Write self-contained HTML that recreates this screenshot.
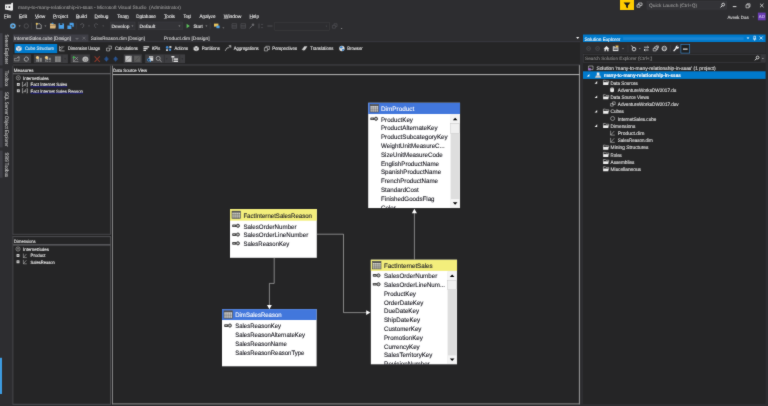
<!DOCTYPE html>
<html><head><meta charset="utf-8"><title>many-to-many-relationship-in-ssas - Microsoft Visual Studio</title>
<style>
html,body{margin:0;padding:0;background:#2d2d30;overflow:hidden}
svg{display:block;font-family:"Liberation Sans",sans-serif;will-change:transform}
text{white-space:pre;stroke-width:0.09px}
</style></head><body>
<svg text-rendering="geometricPrecision" width="768" height="406" viewBox="0 0 768 406">
<defs><filter id="soft" x="0" y="0" width="100%" height="100%" color-interpolation-filters="sRGB"><feConvolveMatrix order="3" kernelMatrix="0.02 0.07 0.02 0.07 0.64 0.07 0.02 0.07 0.02" edgeMode="duplicate" preserveAlpha="true"/></filter></defs>
<g filter="url(#soft)">
<rect x="0.00" y="0.00" width="768.00" height="406.00" fill="#2d2d30" />
<path d="M5 4.6 L11.2 4.2 L11.2 3 L13 2.8 L13 10.2 L11.4 10.7 L5 9.4 Z M6.2 6 L6.2 7.9 L7.3 7 Z M8 6.2 L9.4 7 L8 7.9 L10.2 7.9 L10.2 6.2 Z" fill="#ececec" stroke="none" stroke-width="0.4" fill-rule="evenodd"/>
<text x="18.00" y="9.03" font-size="4.8" fill="#999999" stroke="#999999" textLength="163.00" lengthAdjust="spacingAndGlyphs" >many-to-many-relationship-in-ssas - Microsoft Visual Studio  (Administrator)</text>
<rect x="620.00" y="0.00" width="14.00" height="10.00" fill="#ffcc00" />
<path d="M623.6 2.6 L630.4 2.6 L627.9 5.5 L627.9 8.3 L626.1 7.2 L626.1 5.5 Z" fill="#1a1a1a" stroke="none" stroke-width="0.4" />
<path d="M638.6 3 h3.4 v2.4 h-3.4 z" fill="none" stroke="#dcdcdc" stroke-width="0.7" />
<path d="M637 4.8 h3 v2.4 h-3 z" fill="#2d2d30" stroke="#dcdcdc" stroke-width="0.7" />
<rect x="647.00" y="1.70" width="79.80" height="7.40" fill="#333337" stroke="#434346" stroke-width="0.4"/>
<text x="649.00" y="7.33" font-size="4.8" fill="#9a9a9a" stroke="#9a9a9a" textLength="48.00" lengthAdjust="spacingAndGlyphs" stroke-width="0">Quick Launch (Ctrl+Q)</text>
<circle cx="723.2" cy="4.6" r="1.4" fill="none" stroke="#f1f1f1" stroke-width="0.8"/>
<line x1="722.20" y1="5.70" x2="720.60" y2="7.40" stroke="#f1f1f1" stroke-width="1" />
<line x1="732.80" y1="6.60" x2="736.40" y2="6.60" stroke="#f1f1f1" stroke-width="0.9" />
<path d="M746 4.8 h3 v3 h-3 z M747 4.8 v-1 h3 v3 h-1" fill="none" stroke="#f1f1f1" stroke-width="0.6" />
<path d="M760.1 3.8 l3.4 3.4 M763.5 3.8 l-3.4 3.4" fill="none" stroke="#f1f1f1" stroke-width="0.75" />
<text x="727.40" y="18.79" font-size="4.7" fill="#dedede" stroke="#dedede" textLength="21.20" lengthAdjust="spacingAndGlyphs" stroke-width="0.08">Aveek Das</text>
<path d="M752.4 16.4 h1.8 l-0.9 1 z" fill="#a8a8a8" stroke="none" stroke-width="0.4" />
<rect x="757.90" y="12.60" width="7.70" height="7.70" fill="#6a3cb4" />
<text x="758.80" y="18.38" font-size="4.4" fill="#d4c4f0" stroke="#d4c4f0" textLength="6.00" lengthAdjust="spacingAndGlyphs" >AD</text>
<text x="4.00" y="18.26" font-size="4.9" fill="#f1f1f1" stroke="#f1f1f1" textLength="7.00" lengthAdjust="spacingAndGlyphs" >File</text>
<line x1="4.00" y1="18.50" x2="6.65" y2="18.50" stroke="#d8d8d8" stroke-width="0.45" />
<text x="19.00" y="18.26" font-size="4.9" fill="#f1f1f1" stroke="#f1f1f1" textLength="8.00" lengthAdjust="spacingAndGlyphs" >Edit</text>
<line x1="19.00" y1="18.50" x2="22.10" y2="18.50" stroke="#d8d8d8" stroke-width="0.45" />
<text x="35.00" y="18.26" font-size="4.9" fill="#f1f1f1" stroke="#f1f1f1" textLength="10.30" lengthAdjust="spacingAndGlyphs" >View</text>
<line x1="35.00" y1="18.50" x2="38.20" y2="18.50" stroke="#d8d8d8" stroke-width="0.45" />
<text x="53.10" y="18.26" font-size="4.9" fill="#f1f1f1" stroke="#f1f1f1" textLength="15.00" lengthAdjust="spacingAndGlyphs" >Project</text>
<line x1="53.10" y1="18.50" x2="56.31" y2="18.50" stroke="#d8d8d8" stroke-width="0.45" />
<text x="76.00" y="18.26" font-size="4.9" fill="#f1f1f1" stroke="#f1f1f1" textLength="10.90" lengthAdjust="spacingAndGlyphs" >Build</text>
<line x1="76.00" y1="18.50" x2="79.27" y2="18.50" stroke="#d8d8d8" stroke-width="0.45" />
<text x="94.60" y="18.26" font-size="4.9" fill="#f1f1f1" stroke="#f1f1f1" textLength="13.90" lengthAdjust="spacingAndGlyphs" >Debug</text>
<line x1="94.60" y1="18.50" x2="98.01" y2="18.50" stroke="#d8d8d8" stroke-width="0.45" />
<text x="117.20" y="18.26" font-size="4.9" fill="#f1f1f1" stroke="#f1f1f1" textLength="11.50" lengthAdjust="spacingAndGlyphs" >Team</text>
<line x1="124.78" y1="18.50" x2="128.70" y2="18.50" stroke="#d8d8d8" stroke-width="0.45" />
<text x="136.20" y="18.26" font-size="4.9" fill="#f1f1f1" stroke="#f1f1f1" textLength="19.60" lengthAdjust="spacingAndGlyphs" >Database</text>
<line x1="139.51" y1="18.50" x2="142.05" y2="18.50" stroke="#d8d8d8" stroke-width="0.45" />
<text x="163.90" y="18.26" font-size="4.9" fill="#f1f1f1" stroke="#f1f1f1" textLength="11.10" lengthAdjust="spacingAndGlyphs" >Tools</text>
<line x1="163.90" y1="18.50" x2="166.80" y2="18.50" stroke="#d8d8d8" stroke-width="0.45" />
<text x="183.50" y="18.26" font-size="4.9" fill="#f1f1f1" stroke="#f1f1f1" textLength="7.50" lengthAdjust="spacingAndGlyphs" >Test</text>
<line x1="187.82" y1="18.50" x2="189.86" y2="18.50" stroke="#d8d8d8" stroke-width="0.45" />
<text x="199.40" y="18.26" font-size="4.9" fill="#f1f1f1" stroke="#f1f1f1" textLength="16.20" lengthAdjust="spacingAndGlyphs" >Analyze</text>
<line x1="202.44" y1="18.50" x2="204.97" y2="18.50" stroke="#d8d8d8" stroke-width="0.45" />
<text x="223.70" y="18.26" font-size="4.9" fill="#f1f1f1" stroke="#f1f1f1" textLength="17.80" lengthAdjust="spacingAndGlyphs" >Window</text>
<line x1="223.70" y1="18.50" x2="228.42" y2="18.50" stroke="#d8d8d8" stroke-width="0.45" />
<text x="249.40" y="18.26" font-size="4.9" fill="#f1f1f1" stroke="#f1f1f1" textLength="9.60" lengthAdjust="spacingAndGlyphs" >Help</text>
<line x1="249.40" y1="18.50" x2="252.77" y2="18.50" stroke="#d8d8d8" stroke-width="0.45" />
<circle cx="12.9" cy="26" r="2.05" fill="#2d2d30" stroke="#62b2ee" stroke-width="1.5"/>
<path d="M13.5 25.1 l-1.1 0.9 l1.1 0.9" fill="none" stroke="#eef6ff" stroke-width="0.5" />
<path d="M18.6 25.6 h2 l-1 1.1 z" fill="#9a9a9a" stroke="none" stroke-width="0.4" />
<circle cx="26.3" cy="26" r="2.2" fill="none" stroke="#555559" stroke-width="0.8"/>
<line x1="31.60" y1="22.60" x2="31.60" y2="29.40" stroke="#46464a" stroke-width="0.5" />
<path d="M36.6 23.8 h3.4 l1.2 1.2 v3.6 h-4.6 z" fill="none" stroke="#d8d8d8" stroke-width="0.6" />
<circle cx="36.8" cy="23.8" r="1.1" fill="#e8c35a"/>
<path d="M44.4 25.6 h2 l-1 1.1 z" fill="#9a9a9a" stroke="none" stroke-width="0.4" />
<path d="M50 23.4 h2.4 l0.8 0.8 h2.4 v1.2 h-5.6 z" fill="#dcb67a" stroke="none" stroke-width="0.4" />
<path d="M50 25.6 h6 l-0.6 3 h-5.4 z" fill="#dcb67a" stroke="none" stroke-width="0.4" />
<path d="M52.6 22.6 l1.6 1.2 h-3.2 z" fill="#4aa0e8" stroke="none" stroke-width="0.4" />
<path d="M58.6 23.2 h4.6 l0.8 0.8 v4.8 h-5.4 z" fill="#4aa0e8" stroke="none" stroke-width="0.4" />
<rect x="59.80" y="23.20" width="2.60" height="1.80" fill="#2d2d30" />
<path d="M67.4 25.4 h3.4 l0.6 0.6 v3 h-4 z" fill="#4aa0e8" stroke="none" stroke-width="0.4" />
<path d="M69.6 22.8 h3.6 l0.6 0.6 v3.4 h-1.6 v-1.6 h-2.6 z" fill="#4aa0e8" stroke="none" stroke-width="0.4" />
<line x1="76.20" y1="22.60" x2="76.20" y2="29.40" stroke="#46464a" stroke-width="0.5" />
<path d="M80.2 24.8 q2.2 -2.4 3.6 -0.2 q0.4 1.6 -1.6 3.4" fill="none" stroke="#6a6a6e" stroke-width="0.7" />
<path d="M88 25.6 h2 l-1 1.1 z" fill="#5a5a5e" stroke="none" stroke-width="0.4" />
<path d="M98 24.8 q-2.2 -2.4 -3.6 -0.2 q-0.4 1.6 1.6 3.4" fill="none" stroke="#5a5a5e" stroke-width="0.7" />
<path d="M102.2 25.6 h2 l-1 1.1 z" fill="#5a5a5e" stroke="none" stroke-width="0.4" />
<rect x="110.30" y="22.00" width="24.70" height="7.80" fill="#333337" stroke="#434346" stroke-width="0.4"/>
<text x="111.60" y="28.03" font-size="4.8" fill="#f1f1f1" stroke="#f1f1f1" textLength="17.80" lengthAdjust="spacingAndGlyphs" >Develop</text>
<path d="M131.4 25.6 h2 l-1 1.1 z" fill="#9a9a9a" stroke="none" stroke-width="0.4" />
<rect x="138.20" y="22.00" width="44.60" height="7.80" fill="#333337" stroke="#434346" stroke-width="0.4"/>
<text x="139.60" y="28.03" font-size="4.8" fill="#f1f1f1" stroke="#f1f1f1" textLength="15.80" lengthAdjust="spacingAndGlyphs" >Default</text>
<path d="M178.4 25.6 h2 l-1 1.1 z" fill="#9a9a9a" stroke="none" stroke-width="0.4" />
<path d="M186.6 23.8 l3.2 2.2 l-3.2 2.2 z" fill="#5cc25c" stroke="none" stroke-width="0.4" />
<text x="193.40" y="28.03" font-size="4.8" fill="#f1f1f1" stroke="#f1f1f1" textLength="9.40" lengthAdjust="spacingAndGlyphs" >Start</text>
<path d="M205.4 25.6 h2 l-1 1.1 z" fill="#9a9a9a" stroke="none" stroke-width="0.4" />
<line x1="210.20" y1="22.60" x2="210.20" y2="29.40" stroke="#46464a" stroke-width="0.5" />
<path d="M214 23.6 h4.4 v3 h-4.4 z" fill="#e8c35a" stroke="none" stroke-width="0.4" />
<path d="M216.4 25.6 h3.2 v2.6 h-3.2 z" fill="#4aa0e8" stroke="none" stroke-width="0.4" />
<path d="M222.4 27.4 h2 l-1 1.1 z" fill="#9a9a9a" stroke="none" stroke-width="0.4" />
<path d="M232.0 23.7 h4.6 v4.6 h-4.6 z M232.0 25.4 h4.6 M232.0 26.9 h4.6" fill="none" stroke="#56565a" stroke-width="0.6" />
<path d="M240.89999999999998 23.7 h4.6 v4.6 h-4.6 z M240.89999999999998 25.4 h4.6 M240.89999999999998 26.9 h4.6" fill="none" stroke="#56565a" stroke-width="0.6" />
<path d="M249.6 28.4 l2.6 -2.8" fill="none" stroke="#68686c" stroke-width="1.0" />
<circle cx="253" cy="24.7" r="1.3" fill="#68686c"/>
<path d="M259 23.6 v4.8 M261.2 24.4 h1.6 M261.2 27.6 h1.6" fill="none" stroke="#56565a" stroke-width="0.8" />
<line x1="267.40" y1="26.00" x2="272.40" y2="26.00" stroke="#56565a" stroke-width="0.9" />
<rect x="274.80" y="22.20" width="54.40" height="8.20" fill="#2d2d30" stroke="#434346" stroke-width="0.45"/>
<path d="M325.6 25.8 h1.6 l-0.8 0.9 z" fill="#5a5a5e" stroke="none" stroke-width="0.4" />
<path d="M332.4 25.4 h3 v2.8 h-3 z M334 25.4 v-1.6 h3 v2.8 h-1.4" fill="none" stroke="#56565a" stroke-width="0.6" />
<path d="M340.7 28 h1.8 l-0.9 1 z" fill="#9a9a9a" stroke="none" stroke-width="0.4" />
<rect x="0.00" y="33.20" width="2.60" height="32.20" fill="#3f3f46" />
<rect x="0.00" y="68.40" width="2.60" height="19.20" fill="#3f3f46" />
<rect x="0.00" y="90.60" width="2.60" height="56.80" fill="#3f3f46" />
<rect x="0.00" y="150.60" width="2.60" height="27.20" fill="#3f3f46" />
<text transform="translate(5.00,34.50) rotate(90)" font-size="5.0" fill="#c8c8c8" stroke="#c8c8c8" textLength="29.30" lengthAdjust="spacingAndGlyphs">Server Explorer</text>
<text transform="translate(5.00,70.40) rotate(90)" font-size="5.0" fill="#c8c8c8" stroke="#c8c8c8" textLength="15.80" lengthAdjust="spacingAndGlyphs">Toolbox</text>
<text transform="translate(5.00,92.00) rotate(90)" font-size="5.0" fill="#c8c8c8" stroke="#c8c8c8" textLength="54.40" lengthAdjust="spacingAndGlyphs">SQL Server Object Explorer</text>
<text transform="translate(5.00,152.40) rotate(90)" font-size="5.0" fill="#c8c8c8" stroke="#c8c8c8" textLength="24.60" lengthAdjust="spacingAndGlyphs">SSIS Toolbox</text>
<rect x="0.00" y="357.80" width="2.00" height="36.20" fill="#3d9be0" />
<rect x="13.00" y="42.00" width="567.00" height="362.50" fill="#252526" />
<rect x="13.00" y="34.50" width="75.40" height="7.50" fill="#3f3f46" />
<line x1="13.00" y1="41.70" x2="580.00" y2="41.70" stroke="#3f3f46" stroke-width="0.7" />
<text x="14.00" y="40.26" font-size="4.9" fill="#dcdcdc" stroke="#dcdcdc" textLength="56.80" lengthAdjust="spacingAndGlyphs" stroke-width="0.08">InternetSales.cube [Design]</text>
<line x1="75.40" y1="38.40" x2="78.60" y2="38.40" stroke="#8a8a8e" stroke-width="0.5" />
<line x1="77.00" y1="38.40" x2="77.00" y2="40.00" stroke="#8a8a8e" stroke-width="0.5" />
<path d="M82.6 36.8 l2.8 2.8 M85.4 36.8 l-2.8 2.8" fill="none" stroke="#8a8a8e" stroke-width="0.5" />
<text x="90.80" y="40.26" font-size="4.9" fill="#d8d8d8" stroke="#d8d8d8" textLength="54.00" lengthAdjust="spacingAndGlyphs" stroke-width="0.08">SalesReason.dim [Design]</text>
<text x="163.80" y="40.26" font-size="4.9" fill="#d8d8d8" stroke="#d8d8d8" textLength="45.80" lengthAdjust="spacingAndGlyphs" stroke-width="0.08">Product.dim [Design]</text>
<path d="M576.1 37.1 h3.2 l-1.6 1.8 z" fill="#f1f1f1" stroke="none" stroke-width="0.4" />
<rect x="14.60" y="44.00" width="42.60" height="9.10" fill="#007acc" />
<text x="25.00" y="50.36" font-size="4.9" fill="#f1f1f1" stroke="#f1f1f1" textLength="29.00" lengthAdjust="spacingAndGlyphs" >Cube Structure</text>
<text x="68.00" y="50.36" font-size="4.9" fill="#f1f1f1" stroke="#f1f1f1" textLength="32.00" lengthAdjust="spacingAndGlyphs" >Dimension Usage</text>
<text x="115.00" y="50.36" font-size="4.9" fill="#f1f1f1" stroke="#f1f1f1" textLength="22.90" lengthAdjust="spacingAndGlyphs" >Calculations</text>
<text x="152.00" y="50.36" font-size="4.9" fill="#f1f1f1" stroke="#f1f1f1" textLength="8.20" lengthAdjust="spacingAndGlyphs" >KPIs</text>
<text x="174.40" y="50.36" font-size="4.9" fill="#f1f1f1" stroke="#f1f1f1" textLength="13.60" lengthAdjust="spacingAndGlyphs" >Actions</text>
<text x="201.70" y="50.36" font-size="4.9" fill="#f1f1f1" stroke="#f1f1f1" textLength="18.30" lengthAdjust="spacingAndGlyphs" >Partitions</text>
<text x="233.70" y="50.36" font-size="4.9" fill="#f1f1f1" stroke="#f1f1f1" textLength="25.00" lengthAdjust="spacingAndGlyphs" >Aggregations</text>
<text x="272.30" y="50.36" font-size="4.9" fill="#f1f1f1" stroke="#f1f1f1" textLength="24.80" lengthAdjust="spacingAndGlyphs" >Perspectives</text>
<text x="310.20" y="50.36" font-size="4.9" fill="#f1f1f1" stroke="#f1f1f1" textLength="23.10" lengthAdjust="spacingAndGlyphs" >Translations</text>
<text x="347.30" y="50.36" font-size="4.9" fill="#f1f1f1" stroke="#f1f1f1" textLength="15.30" lengthAdjust="spacingAndGlyphs" >Browser</text>
<path d="M16 47.1 l2.8 -1.2 l2.8 1.2 v3 l-2.8 1.3 l-2.8 -1.3 z" fill="#e6e6e6" stroke="none" stroke-width="0.4" />
<path d="M16 47.1 l2.8 1.2 l2.8 -1.2 M18.8 48.3 v3" fill="none" stroke="#1a5c96" stroke-width="0.4" />
<path d="M59.6 45.9 v5 h5 M59.6 50.9 l4.4 -4.6 M59.6 47.9 l3 -1.4" fill="none" stroke="#d4d4d4" stroke-width="0.6" />
<path d="M106.6 48.1 h3 v2.8 h-3 z M108.4 46.1 h3 v2.8 h-1.2" fill="none" stroke="#d4d4d4" stroke-width="0.6" />
<rect x="143.40" y="46.30" width="5.80" height="1.20" fill="#e8e8e8" />
<rect x="143.40" y="48.10" width="4.20" height="1.20" fill="#e8e8e8" />
<rect x="143.40" y="49.90" width="2.60" height="1.00" fill="#e8e8e8" />
<circle cx="167.2" cy="47.4" r="1.3" fill="#3f8ad4"/>
<circle cx="170" cy="49.8" r="1.2" fill="#3f8ad4"/>
<path d="M166 51.1 h2 v-1.8 h-2 z M169.4 46.1 h2 v1.8 h-2 z" fill="#c8c8c8" stroke="none" stroke-width="0.4" />
<path d="M193.6 47.3 l2.6 -1.2 l2.6 1.2 v2.8 l-2.6 1.2 l-2.6 -1.2 z" fill="#dcdcdc" stroke="none" stroke-width="0.4" />
<path d="M196.2 48.5 v2.8 M193.6 47.3 l2.6 1.2 l2.6 -1.2" fill="none" stroke="#252526" stroke-width="0.4" />
<path d="M225.2 50.9 l1.8 -3 h1.6 l2 -2.2 M228.8 45.7 h2 v2" fill="none" stroke="#d4d4d4" stroke-width="0.7" />
<path d="M264.4 47.7 h3.2 v3.2 h-3.2 z M265.8 47.7 v-1.4 h3.6 v3.2 h-1.6" fill="none" stroke="#d4d4d4" stroke-width="0.6" />
<path d="M302 49.7 l2.4 -3.2 h2.6 l-2.2 3.4 z M303.4 51.1 l2.2 -3.4" fill="#d0d0d0" stroke="#d4d4d4" stroke-width="0.4" />
<circle cx="341.9" cy="48.5" r="2.7" fill="#dcdcdc"/>
<path d="M339.6 47.1 q2 -1.6 3.4 0.2 q-1 1.6 -2.6 1 z M342 49.3 q1.6 -0.6 2.4 0.4 q-0.8 1.4 -2.2 1.4 z" fill="#3a86d0" stroke="none" stroke-width="0.4" />
<rect x="13.20" y="54.40" width="17.80" height="8.70" fill="#3e3e41" />
<rect x="33.90" y="54.40" width="34.00" height="8.70" fill="#3e3e41" />
<rect x="70.60" y="54.40" width="19.20" height="8.70" fill="#3e3e41" />
<rect x="123.80" y="54.40" width="18.10" height="8.70" fill="#3e3e41" />
<rect x="145.20" y="54.40" width="39.80" height="8.70" fill="#3e3e41" />
<line x1="32.50" y1="55.00" x2="32.50" y2="62.60" stroke="#222224" stroke-width="0.5" />
<line x1="69.30" y1="55.00" x2="69.30" y2="62.60" stroke="#222224" stroke-width="0.5" />
<line x1="91.40" y1="55.00" x2="91.40" y2="62.60" stroke="#222224" stroke-width="0.5" />
<line x1="122.20" y1="55.00" x2="122.20" y2="62.60" stroke="#222224" stroke-width="0.5" />
<line x1="143.50" y1="55.00" x2="143.50" y2="62.60" stroke="#222224" stroke-width="0.5" />
<line x1="62.00" y1="55.00" x2="62.00" y2="62.60" stroke="#2a2a2c" stroke-width="0.5" />
<line x1="164.40" y1="55.00" x2="164.40" y2="62.60" stroke="#2a2a2c" stroke-width="0.5" />
<line x1="179.70" y1="55.00" x2="179.70" y2="62.60" stroke="#2a2a2c" stroke-width="0.5" />
<path d="M14.4 58.4 h2.2 l2.4 -2 v4.4 h-4.6 z" fill="none" stroke="#9c9c9c" stroke-width="0.7" />
<line x1="17.00" y1="57.40" x2="19.60" y2="57.40" stroke="#9c9c9c" stroke-width="0.6" />
<circle cx="26.3" cy="59.1" r="2.1" fill="none" stroke="#b4b4b4" stroke-width="0.9"/>
<path d="M24 56.6 l1 1.4 M28.6 61.4 l-1 -1.4" fill="none" stroke="#3e3e41" stroke-width="0.8" />
<rect x="37.40" y="56.60" width="1.80" height="5.20" fill="#9a9a9a" />
<rect x="39.80" y="57.80" width="2.00" height="4.00" fill="#8a8a8a" />
<rect x="36.20" y="59.40" width="0.80" height="2.40" fill="#8a8a8a" />
<circle cx="37.4" cy="57.5" r="1.5" fill="#f0cc84"/>
<rect x="46.40" y="56.60" width="1.80" height="5.20" fill="#9a9a9a" />
<rect x="48.80" y="57.80" width="2.00" height="4.00" fill="#8a8a8a" />
<rect x="45.20" y="59.40" width="0.80" height="2.40" fill="#8a8a8a" />
<circle cx="46.4" cy="57.5" r="1.5" fill="#f0cc84"/>
<rect x="46.40" y="60.20" width="4.20" height="1.00" fill="#3e3e41" />
<rect x="55.00" y="56.40" width="5.80" height="5.50" fill="#8c8c8c" />
<line x1="57.90" y1="56.40" x2="57.90" y2="61.90" stroke="#5a5a5a" stroke-width="0.4" />
<line x1="55.00" y1="58.20" x2="60.80" y2="58.20" stroke="#5a5a5a" stroke-width="0.4" />
<line x1="55.00" y1="60.00" x2="60.80" y2="60.00" stroke="#5a5a5a" stroke-width="0.4" />
<path d="M64.2 58.6 h1.8 l-0.9 1 z" fill="#242426" stroke="none" stroke-width="0.4" />
<path d="M73.4 56.6 v5 h5 M73.4 61.6 l4.4 -4.6 M75 57 l3 3" fill="none" stroke="#a8a8a8" stroke-width="0.6" />
<circle cx="73.8" cy="57.4" r="1.1" fill="#3fbf4f"/>
<path d="M82.4 59.6 q0 -3 3 -3 q3 0 3 3 q0 2.4 -3 2.4 q-3 0 -3 -2.4 z" fill="#b8b8b8" stroke="none" stroke-width="0.4" />
<circle cx="85.6" cy="59.8" r="1.3" fill="none" stroke="#6a6a6a" stroke-width="0.5"/>
<path d="M94.6 56.4 l5.2 5.4 M99.8 56.4 l-5.2 5.4" fill="none" stroke="#8c3628" stroke-width="1.05" />
<path d="M106.4 56.2 l2.4 2.8 l-2.4 2.8 l-2.4 -2.8 z" fill="#244a80" stroke="none" stroke-width="0.4" />
<path d="M106.4 57.4 v3.2 m-1 -1 l1 1 l1 -1" fill="none" stroke="#3f6aa8" stroke-width="0.35" />
<path d="M115.6 56.2 l2.4 2.8 l-2.4 2.8 l-2.4 -2.8 z" fill="#244a80" stroke="none" stroke-width="0.4" />
<path d="M115.6 60.6 v-3.2 m-1 1 l1 -1 l1 1" fill="none" stroke="#3f6aa8" stroke-width="0.35" />
<rect x="125.30" y="55.80" width="6.30" height="6.10" fill="#c4c4c4" />
<path d="M125.8 61.4 l5.2 -5" fill="none" stroke="#7a7a7a" stroke-width="0.6" />
<rect x="134.10" y="55.80" width="6.40" height="6.10" fill="#5c5c5c" />
<path d="M134.6 61.4 l5.2 -5" fill="none" stroke="#484848" stroke-width="0.6" />
<path d="M149 56.2 h4.2 v4.6 h-4.2 z" fill="#d8d8d8" stroke="none" stroke-width="0.4" />
<line x1="149.00" y1="57.40" x2="153.20" y2="57.40" stroke="#5a5a5a" stroke-width="0.4" />
<circle cx="148.8" cy="59.8" r="1.3" fill="#2d2d30" stroke="#4aa0ec" stroke-width="0.8"/>
<line x1="149.80" y1="60.80" x2="151.00" y2="62.00" stroke="#4aa0ec" stroke-width="0.8" />
<circle cx="158.2" cy="58.4" r="2" fill="none" stroke="#a8a8a8" stroke-width="0.8"/>
<line x1="159.60" y1="60.00" x2="161.60" y2="61.80" stroke="#a8a8a8" stroke-width="0.9" />
<path d="M165.8 58.6 h1.8 l-0.9 1 z" fill="#242426" stroke="none" stroke-width="0.4" />
<rect x="171.40" y="56.00" width="3.00" height="1.60" fill="#e4e4e4" />
<rect x="174.00" y="58.40" width="4.00" height="1.40" fill="#e4e4e4" />
<rect x="174.00" y="60.60" width="4.00" height="1.40" fill="#e4e4e4" />
<path d="M172.6 57.6 v3.8 h1.4 M172.6 59.1 h1.4" fill="none" stroke="#e4e4e4" stroke-width="0.5" />
<path d="M181.4 58.6 h1.8 l-0.9 1 z" fill="#242426" stroke="none" stroke-width="0.4" />
<rect x="13.00" y="64.20" width="567.00" height="1.50" fill="#3a3a3d" />
<line x1="12.90" y1="65.70" x2="12.90" y2="234.30" stroke="#4e4e52" stroke-width="0.8" />
<line x1="110.60" y1="65.70" x2="110.60" y2="234.30" stroke="#5a5a5e" stroke-width="0.8" />
<line x1="12.50" y1="234.30" x2="111.00" y2="234.30" stroke="#4e4e52" stroke-width="0.8" />
<line x1="13.00" y1="73.80" x2="110.60" y2="73.80" stroke="#6e6e72" stroke-width="1.1" />
<text x="13.80" y="71.76" font-size="4.6" fill="#f1f1f1" stroke="#f1f1f1" textLength="19.60" lengthAdjust="spacingAndGlyphs" >Measures</text>
<line x1="12.50" y1="236.60" x2="111.00" y2="236.60" stroke="#58585c" stroke-width="0.8" />
<line x1="13.00" y1="244.90" x2="110.60" y2="244.90" stroke="#66666a" stroke-width="1.1" />
<line x1="12.90" y1="236.60" x2="12.90" y2="404.20" stroke="#4e4e52" stroke-width="0.8" />
<line x1="110.60" y1="236.60" x2="110.60" y2="404.20" stroke="#5a5a5e" stroke-width="0.8" />
<line x1="12.50" y1="404.30" x2="111.00" y2="404.30" stroke="#4a4c52" stroke-width="1.0" />
<text x="14.10" y="242.86" font-size="4.6" fill="#f1f1f1" stroke="#f1f1f1" textLength="21.50" lengthAdjust="spacingAndGlyphs" >Dimensions</text>
<circle cx="18.3" cy="77.8" r="2.1" fill="none" stroke="#c8c8c8" stroke-width="0.5"/>
<path d="M17.3 77.39999999999999 h2 M18.3 77.39999999999999 v1.6" fill="none" stroke="#c8c8c8" stroke-width="0.4" />
<text x="23.00" y="79.76" font-size="4.6" fill="#f1f1f1" stroke="#f1f1f1" textLength="25.80" lengthAdjust="spacingAndGlyphs" >InternetSales</text>
<rect x="16.90" y="83.00" width="2.80" height="2.80" fill="#e8e8e8" />
<line x1="17.50" y1="84.40" x2="19.10" y2="84.40" stroke="#333" stroke-width="0.4" />
<line x1="18.30" y1="83.60" x2="18.30" y2="85.20" stroke="#333" stroke-width="0.4" />
<path d="M23.2 82.2 h-0.8 v4.4 h0.8 M26.6 82.2 h0.8 v4.4 h-0.8 M23.6 85.8 v-0.8 M24.6 85.8 v-1.8 M25.7 85.8 v-3" fill="none" stroke="#e0e0e0" stroke-width="0.55" />
<text x="30.50" y="86.26" font-size="4.6" fill="#f1f1f1" stroke="#f1f1f1" textLength="36.70" lengthAdjust="spacingAndGlyphs" >Fact Internet Sales</text>
<line x1="30.50" y1="86.80" x2="67.20" y2="86.80" stroke="#1818a8" stroke-width="0.7" />
<rect x="16.90" y="89.40" width="2.80" height="2.80" fill="#e8e8e8" />
<line x1="17.50" y1="90.80" x2="19.10" y2="90.80" stroke="#333" stroke-width="0.4" />
<line x1="18.30" y1="90.00" x2="18.30" y2="91.60" stroke="#333" stroke-width="0.4" />
<path d="M23.2 88.6 h-0.8 v4.4 h0.8 M26.6 88.6 h0.8 v4.4 h-0.8 M23.6 92.2 v-0.8 M24.6 92.2 v-1.8 M25.7 92.2 v-3" fill="none" stroke="#e0e0e0" stroke-width="0.55" />
<text x="30.50" y="92.66" font-size="4.6" fill="#f1f1f1" stroke="#f1f1f1" textLength="52.50" lengthAdjust="spacingAndGlyphs" >Fact Internet Sales Reason</text>
<line x1="30.50" y1="93.20" x2="83.00" y2="93.20" stroke="#1818a8" stroke-width="0.7" />
<circle cx="18" cy="249" r="2.1" fill="none" stroke="#c8c8c8" stroke-width="0.5"/>
<path d="M17 248.6 h2 M18 248.6 v1.6" fill="none" stroke="#c8c8c8" stroke-width="0.4" />
<text x="23.00" y="250.96" font-size="4.6" fill="#f1f1f1" stroke="#f1f1f1" textLength="26.00" lengthAdjust="spacingAndGlyphs" >InternetSales</text>
<rect x="16.60" y="254.10" width="2.80" height="2.80" fill="#e8e8e8" />
<line x1="17.20" y1="255.50" x2="18.80" y2="255.50" stroke="#333" stroke-width="0.4" />
<line x1="18.00" y1="254.70" x2="18.00" y2="256.30" stroke="#333" stroke-width="0.4" />
<path d="M23.4 253.6 v4 h3.4 M23.4 257.6 l3 -3.6" fill="none" stroke="#c8c8c8" stroke-width="0.5" />
<text x="30.60" y="257.46" font-size="4.6" fill="#f1f1f1" stroke="#f1f1f1" textLength="14.90" lengthAdjust="spacingAndGlyphs" >Product</text>
<rect x="16.60" y="260.40" width="2.80" height="2.80" fill="#e8e8e8" />
<line x1="17.20" y1="261.80" x2="18.80" y2="261.80" stroke="#333" stroke-width="0.4" />
<line x1="18.00" y1="261.00" x2="18.00" y2="262.60" stroke="#333" stroke-width="0.4" />
<path d="M23.4 259.8 v4 h3.4 M23.4 263.8 l3 -3.6" fill="none" stroke="#c8c8c8" stroke-width="0.5" />
<text x="30.60" y="263.76" font-size="4.6" fill="#f1f1f1" stroke="#f1f1f1" textLength="24.20" lengthAdjust="spacingAndGlyphs" >SalesReason</text>
<line x1="112.60" y1="74.60" x2="579.80" y2="74.60" stroke="#c8c8c8" stroke-width="0.9" />
<line x1="112.50" y1="65.70" x2="112.50" y2="404.30" stroke="#8c8c8c" stroke-width="0.9" />
<line x1="579.40" y1="65.20" x2="579.40" y2="404.30" stroke="#a8a8a8" stroke-width="0.9" />
<line x1="112.10" y1="403.90" x2="579.90" y2="403.90" stroke="#8a8a8a" stroke-width="1.0" />
<text x="113.20" y="71.96" font-size="4.6" fill="#f1f1f1" stroke="#f1f1f1" textLength="33.80" lengthAdjust="spacingAndGlyphs" >Data Source View</text>
<clipPath id="c1"><rect x="368.1" y="102.6" width="92.09999999999997" height="105.6"/></clipPath><g clip-path="url(#c1)">
<rect x="368.10" y="102.60" width="92.10" height="105.60" fill="#ffffff" />
<rect x="368.10" y="102.60" width="92.10" height="11.40" fill="#4277dc" />
<rect x="370.10" y="104.60" width="8.40" height="7.40" fill="#e4e4e4" />
<rect x="370.10" y="104.60" width="8.40" height="1.50" fill="#555" />
<line x1="372.20" y1="106.30" x2="372.20" y2="112.00" stroke="#444" stroke-width="0.4" />
<line x1="374.30" y1="106.30" x2="374.30" y2="112.00" stroke="#444" stroke-width="0.4" />
<line x1="376.40" y1="106.30" x2="376.40" y2="112.00" stroke="#444" stroke-width="0.4" />
<line x1="370.10" y1="107.90" x2="378.50" y2="107.90" stroke="#444" stroke-width="0.4" />
<line x1="370.10" y1="109.40" x2="378.50" y2="109.40" stroke="#444" stroke-width="0.4" />
<line x1="370.10" y1="110.90" x2="378.50" y2="110.90" stroke="#444" stroke-width="0.4" />
<rect x="370.1" y="104.6" width="8.4" height="7.4" fill="none" stroke="#444" stroke-width="0.6"/>
<text x="381.00" y="111.10" font-size="6.4" fill="#fff" stroke="#fff" textLength="33.26" lengthAdjust="spacingAndGlyphs" stroke-width="0.06">DimProduct</text>
<text x="381.00" y="121.50" font-size="6.4" fill="#101018" stroke="#101018" textLength="31.93" lengthAdjust="spacingAndGlyphs" stroke-width="0.05">ProductKey</text>
<rect x="370.30" y="117.40" width="4" height="2.7" rx="0.7" fill="#454545"/>
<rect x="371.20" y="118.30" width="2" height="0.9" fill="#a0a0a0"/>
<circle cx="376.00" cy="118.75" r="1.55" fill="#b4b4b4" stroke="#3c3c3c" stroke-width="1"/>
<text x="381.00" y="130.30" font-size="6.4" fill="#101018" stroke="#101018" textLength="56.65" lengthAdjust="spacingAndGlyphs" stroke-width="0.05">ProductAlternateKey</text>
<text x="381.00" y="139.10" font-size="6.4" fill="#101018" stroke="#101018" textLength="66.60" lengthAdjust="spacingAndGlyphs" stroke-width="0.05">ProductSubcategoryKey</text>
<text x="381.00" y="147.90" font-size="6.4" fill="#101018" stroke="#101018" textLength="63.73" lengthAdjust="spacingAndGlyphs" stroke-width="0.05">WeightUnitMeasureC...</text>
<text x="381.00" y="156.70" font-size="6.4" fill="#101018" stroke="#101018" textLength="61.79" lengthAdjust="spacingAndGlyphs" stroke-width="0.05">SizeUnitMeasureCode</text>
<text x="381.00" y="165.50" font-size="6.4" fill="#101018" stroke="#101018" textLength="58.02" lengthAdjust="spacingAndGlyphs" stroke-width="0.05">EnglishProductName</text>
<text x="381.00" y="174.30" font-size="6.4" fill="#101018" stroke="#101018" textLength="60.08" lengthAdjust="spacingAndGlyphs" stroke-width="0.05">SpanishProductName</text>
<text x="381.00" y="183.10" font-size="6.4" fill="#101018" stroke="#101018" textLength="56.98" lengthAdjust="spacingAndGlyphs" stroke-width="0.05">FrenchProductName</text>
<text x="381.00" y="191.90" font-size="6.4" fill="#101018" stroke="#101018" textLength="37.76" lengthAdjust="spacingAndGlyphs" stroke-width="0.05">StandardCost</text>
<text x="381.00" y="200.70" font-size="6.4" fill="#101018" stroke="#101018" textLength="53.55" lengthAdjust="spacingAndGlyphs" stroke-width="0.05">FinishedGoodsFlag</text>
<text x="381.00" y="209.50" font-size="6.4" fill="#101018" stroke="#101018" textLength="14.76" lengthAdjust="spacingAndGlyphs" stroke-width="0.05">Color</text>
<rect x="450.60" y="114.60" width="9.10" height="93.00" fill="#dedede" />
<rect x="450.60" y="114.60" width="9.10" height="8.60" fill="#f4f4f4" />
<rect x="450.60" y="199.00" width="9.10" height="8.60" fill="#f4f4f4" />
<rect x="450.60" y="123.60" width="9.10" height="9.80" fill="#f0f0f0" stroke="#b8b8b8" stroke-width="0.3"/>
<path d="M452.84999999999997 120.2 h4.6 l-2.3 -2.5 z" fill="#000" stroke="none" stroke-width="0.4" />
<path d="M452.84999999999997 202.2 h4.6 l-2.3 2.5 z" fill="#000" stroke="none" stroke-width="0.4" />
</g>
<rect x="230.00" y="209.00" width="86.80" height="48.80" fill="#ffffff" />
<rect x="230.00" y="209.00" width="86.80" height="11.70" fill="#f3ee7c" />
<rect x="232.00" y="211.15" width="8.40" height="7.40" fill="#deded0" />
<rect x="232.00" y="211.15" width="8.40" height="1.50" fill="#555" />
<line x1="234.10" y1="212.85" x2="234.10" y2="218.55" stroke="#444" stroke-width="0.4" />
<line x1="236.20" y1="212.85" x2="236.20" y2="218.55" stroke="#444" stroke-width="0.4" />
<line x1="238.30" y1="212.85" x2="238.30" y2="218.55" stroke="#444" stroke-width="0.4" />
<line x1="232.00" y1="214.45" x2="240.40" y2="214.45" stroke="#444" stroke-width="0.4" />
<line x1="232.00" y1="215.95" x2="240.40" y2="215.95" stroke="#444" stroke-width="0.4" />
<line x1="232.00" y1="217.45" x2="240.40" y2="217.45" stroke="#444" stroke-width="0.4" />
<rect x="232" y="211.15" width="8.4" height="7.4" fill="none" stroke="#444" stroke-width="0.6"/>
<text x="243.40" y="217.65" font-size="6.4" fill="#141420" stroke="#141420" textLength="68.61" lengthAdjust="spacingAndGlyphs" stroke-width="0.06">FactInternetSalesReason</text>
<text x="243.40" y="228.50" font-size="6.4" fill="#101018" stroke="#101018" textLength="53.20" lengthAdjust="spacingAndGlyphs" stroke-width="0.05">SalesOrderNumber</text>
<rect x="232.20" y="224.40" width="4" height="2.7" rx="0.7" fill="#454545"/>
<rect x="233.10" y="225.30" width="2" height="0.9" fill="#a0a0a0"/>
<circle cx="237.90" cy="225.75" r="1.55" fill="#b4b4b4" stroke="#3c3c3c" stroke-width="1"/>
<text x="243.40" y="237.30" font-size="6.4" fill="#101018" stroke="#101018" textLength="64.88" lengthAdjust="spacingAndGlyphs" stroke-width="0.05">SalesOrderLineNumber</text>
<rect x="232.20" y="233.20" width="4" height="2.7" rx="0.7" fill="#454545"/>
<rect x="233.10" y="234.10" width="2" height="0.9" fill="#a0a0a0"/>
<circle cx="237.90" cy="234.55" r="1.55" fill="#b4b4b4" stroke="#3c3c3c" stroke-width="1"/>
<text x="243.40" y="246.10" font-size="6.4" fill="#101018" stroke="#101018" textLength="45.91" lengthAdjust="spacingAndGlyphs" stroke-width="0.05">SalesReasonKey</text>
<rect x="232.20" y="242.00" width="4" height="2.7" rx="0.7" fill="#454545"/>
<rect x="233.10" y="242.90" width="2" height="0.9" fill="#a0a0a0"/>
<circle cx="237.90" cy="243.35" r="1.55" fill="#b4b4b4" stroke="#3c3c3c" stroke-width="1"/>
<rect x="222.00" y="309.10" width="94.60" height="57.20" fill="#ffffff" />
<rect x="222.00" y="309.10" width="94.60" height="10.90" fill="#4277dc" />
<rect x="224.00" y="310.85" width="8.40" height="7.40" fill="#e4e4e4" />
<rect x="224.00" y="310.85" width="8.40" height="1.50" fill="#555" />
<line x1="226.10" y1="312.55" x2="226.10" y2="318.25" stroke="#444" stroke-width="0.4" />
<line x1="228.20" y1="312.55" x2="228.20" y2="318.25" stroke="#444" stroke-width="0.4" />
<line x1="230.30" y1="312.55" x2="230.30" y2="318.25" stroke="#444" stroke-width="0.4" />
<line x1="224.00" y1="314.15" x2="232.40" y2="314.15" stroke="#444" stroke-width="0.4" />
<line x1="224.00" y1="315.65" x2="232.40" y2="315.65" stroke="#444" stroke-width="0.4" />
<line x1="224.00" y1="317.15" x2="232.40" y2="317.15" stroke="#444" stroke-width="0.4" />
<rect x="224" y="310.85" width="8.4" height="7.4" fill="none" stroke="#444" stroke-width="0.6"/>
<text x="235.20" y="317.35" font-size="6.4" fill="#fff" stroke="#fff" textLength="46.48" lengthAdjust="spacingAndGlyphs" stroke-width="0.06">DimSalesReason</text>
<text x="235.20" y="328.30" font-size="6.4" fill="#101018" stroke="#101018" textLength="45.91" lengthAdjust="spacingAndGlyphs" stroke-width="0.05">SalesReasonKey</text>
<rect x="224.20" y="324.20" width="4" height="2.7" rx="0.7" fill="#454545"/>
<rect x="225.10" y="325.10" width="2" height="0.9" fill="#a0a0a0"/>
<circle cx="229.90" cy="325.55" r="1.55" fill="#b4b4b4" stroke="#3c3c3c" stroke-width="1"/>
<text x="235.20" y="337.10" font-size="6.4" fill="#101018" stroke="#101018" textLength="69.86" lengthAdjust="spacingAndGlyphs" stroke-width="0.05">SalesReasonAlternateKey</text>
<text x="235.20" y="345.90" font-size="6.4" fill="#101018" stroke="#101018" textLength="51.56" lengthAdjust="spacingAndGlyphs" stroke-width="0.05">SalesReasonName</text>
<text x="235.20" y="354.70" font-size="6.4" fill="#101018" stroke="#101018" textLength="69.19" lengthAdjust="spacingAndGlyphs" stroke-width="0.05">SalesReasonReasonType</text>
<clipPath id="c2"><rect x="370.6" y="259.5" width="86.59999999999997" height="105.10000000000002"/></clipPath><g clip-path="url(#c2)">
<rect x="370.60" y="259.50" width="86.60" height="105.10" fill="#ffffff" />
<rect x="370.60" y="259.50" width="86.60" height="11.40" fill="#f3ee7c" />
<rect x="372.60" y="261.50" width="8.40" height="7.40" fill="#deded0" />
<rect x="372.60" y="261.50" width="8.40" height="1.50" fill="#555" />
<line x1="374.70" y1="263.20" x2="374.70" y2="268.90" stroke="#444" stroke-width="0.4" />
<line x1="376.80" y1="263.20" x2="376.80" y2="268.90" stroke="#444" stroke-width="0.4" />
<line x1="378.90" y1="263.20" x2="378.90" y2="268.90" stroke="#444" stroke-width="0.4" />
<line x1="372.60" y1="264.80" x2="381.00" y2="264.80" stroke="#444" stroke-width="0.4" />
<line x1="372.60" y1="266.30" x2="381.00" y2="266.30" stroke="#444" stroke-width="0.4" />
<line x1="372.60" y1="267.80" x2="381.00" y2="267.80" stroke="#444" stroke-width="0.4" />
<rect x="372.6" y="261.5" width="8.4" height="7.4" fill="none" stroke="#444" stroke-width="0.6"/>
<text x="384.00" y="268.00" font-size="6.4" fill="#141420" stroke="#141420" textLength="48.65" lengthAdjust="spacingAndGlyphs" stroke-width="0.06">FactInternetSales</text>
<text x="384.00" y="278.20" font-size="6.4" fill="#101018" stroke="#101018" textLength="53.20" lengthAdjust="spacingAndGlyphs" stroke-width="0.05">SalesOrderNumber</text>
<rect x="372.80" y="274.10" width="4" height="2.7" rx="0.7" fill="#454545"/>
<rect x="373.70" y="275.00" width="2" height="0.9" fill="#a0a0a0"/>
<circle cx="378.50" cy="275.45" r="1.55" fill="#b4b4b4" stroke="#3c3c3c" stroke-width="1"/>
<text x="384.00" y="287.00" font-size="6.4" fill="#101018" stroke="#101018" textLength="61.10" lengthAdjust="spacingAndGlyphs" stroke-width="0.05">SalesOrderLineNum...</text>
<rect x="372.80" y="282.90" width="4" height="2.7" rx="0.7" fill="#454545"/>
<rect x="373.70" y="283.80" width="2" height="0.9" fill="#a0a0a0"/>
<circle cx="378.50" cy="284.25" r="1.55" fill="#b4b4b4" stroke="#3c3c3c" stroke-width="1"/>
<text x="384.00" y="295.80" font-size="6.4" fill="#101018" stroke="#101018" textLength="31.93" lengthAdjust="spacingAndGlyphs" stroke-width="0.05">ProductKey</text>
<text x="384.00" y="304.60" font-size="6.4" fill="#101018" stroke="#101018" textLength="39.47" lengthAdjust="spacingAndGlyphs" stroke-width="0.05">OrderDateKey</text>
<text x="384.00" y="313.40" font-size="6.4" fill="#101018" stroke="#101018" textLength="35.02" lengthAdjust="spacingAndGlyphs" stroke-width="0.05">DueDateKey</text>
<text x="384.00" y="322.20" font-size="6.4" fill="#101018" stroke="#101018" textLength="36.05" lengthAdjust="spacingAndGlyphs" stroke-width="0.05">ShipDateKey</text>
<text x="384.00" y="331.00" font-size="6.4" fill="#101018" stroke="#101018" textLength="37.41" lengthAdjust="spacingAndGlyphs" stroke-width="0.05">CustomerKey</text>
<text x="384.00" y="339.80" font-size="6.4" fill="#101018" stroke="#101018" textLength="38.79" lengthAdjust="spacingAndGlyphs" stroke-width="0.05">PromotionKey</text>
<text x="384.00" y="348.60" font-size="6.4" fill="#101018" stroke="#101018" textLength="35.70" lengthAdjust="spacingAndGlyphs" stroke-width="0.05">CurrencyKey</text>
<text x="384.00" y="357.40" font-size="6.4" fill="#101018" stroke="#101018" textLength="48.40" lengthAdjust="spacingAndGlyphs" stroke-width="0.05">SalesTerritoryKey</text>
<text x="384.00" y="366.20" font-size="6.4" fill="#101018" stroke="#101018" textLength="45.65" lengthAdjust="spacingAndGlyphs" stroke-width="0.05">RevisionNumber</text>
<rect x="447.60" y="271.50" width="9.10" height="92.50" fill="#dedede" />
<rect x="447.60" y="271.50" width="9.10" height="8.60" fill="#f4f4f4" />
<rect x="447.60" y="355.40" width="9.10" height="8.60" fill="#f4f4f4" />
<rect x="447.60" y="280.30" width="9.10" height="9.40" fill="#f0f0f0" stroke="#b8b8b8" stroke-width="0.3"/>
<path d="M449.84999999999997 277.09999999999997 h4.6 l-2.3 -2.5 z" fill="#000" stroke="none" stroke-width="0.4" />
<path d="M449.84999999999997 358.6 h4.6 l-2.3 2.5 z" fill="#000" stroke="none" stroke-width="0.4" />
</g>
<path d="M274.2 257.8 V283.4 H269.4 V306" fill="none" stroke="#c6c6c6" stroke-width="0.6" />
<path d="M269.4 309.2 l-2.4 -4.2 h4.8 z" fill="#ffffff" stroke="none" stroke-width="0.4" />
<path d="M316.8 234.2 H343.5 V312.6 H367" fill="none" stroke="#c6c6c6" stroke-width="0.6" />
<path d="M370.4 312.6 l-4.2 -2.4 v4.8 z" fill="#ffffff" stroke="none" stroke-width="0.4" />
<path d="M414.4 259.4 V211.6" fill="none" stroke="#c6c6c6" stroke-width="0.6" />
<path d="M414.4 208.8 l-2.5 4.4 h5 z" fill="#ffffff" stroke="none" stroke-width="0.4" />
<rect x="583.00" y="34.50" width="182.60" height="369.40" fill="#252526" />
<rect x="583.00" y="34.50" width="182.60" height="8.10" fill="#007acc" />
<text x="584.40" y="40.76" font-size="4.9" fill="#ffffff" stroke="#ffffff" textLength="36.00" lengthAdjust="spacingAndGlyphs" >Solution Explorer</text>
<rect x="623.00" y="37.30" width="120.60" height="2.60" fill="#1b86d2" />
<path d="M746.6 37.4 h2.8 l-1.4 1.5 z" fill="#fff" stroke="none" stroke-width="0.4" />
<path d="M753.8 36.2 h1.7 v2.8 h-1.7 z M753 39.1 h3.3 M754.65 39.1 v1.7" fill="none" stroke="#fff" stroke-width="0.6" />
<path d="M759.7 36.5 l3 3 M762.7 36.5 l-3 3" fill="none" stroke="#fff" stroke-width="0.75" />
<rect x="583.00" y="42.00" width="182.60" height="11.40" fill="#2d2d30" />
<circle cx="588.6" cy="48.5" r="1.9" fill="none" stroke="#5a5a5e" stroke-width="0.6"/>
<line x1="587.70" y1="48.50" x2="589.50" y2="48.50" stroke="#5a5a5e" stroke-width="0.5" />
<circle cx="597.6" cy="48.5" r="1.9" fill="none" stroke="#5a5a5e" stroke-width="0.6"/>
<line x1="596.70" y1="48.50" x2="598.50" y2="48.50" stroke="#5a5a5e" stroke-width="0.5" />
<path d="M603.6 48.8 l2.9 -2.9 l2.9 2.9 h-0.9 v2.5 h-1.3 v-1.7 h-1.4 v1.7 h-1.3 v-2.5 z" fill="#ececec" stroke="none" stroke-width="0.4" />
<path d="M612.8 47.3 h5.6 v3.8 h-5.6 z" fill="#e0e0e0" stroke="none" stroke-width="0.4" />
<rect x="615.60" y="45.50" width="2.80" height="1.70" fill="#e8c060" />
<rect x="612.80" y="46.30" width="2.00" height="1.00" fill="#e0e0e0" />
<rect x="613.60" y="48.50" width="4.00" height="1.20" fill="#2d2d30" />
<path d="M622.1 48.3 h1.8 l-0.9 1 z" fill="#b0b0b0" stroke="none" stroke-width="0.4" />
<line x1="628.00" y1="45.10" x2="628.00" y2="51.90" stroke="#46464a" stroke-width="0.5" />
<circle cx="634" cy="49.1" r="1.8" fill="none" stroke="#ececec" stroke-width="0.8"/>
<path d="M631.4 45.5 l1.8 2.2" fill="none" stroke="#ececec" stroke-width="0.8" />
<line x1="634.00" y1="49.10" x2="634.00" y2="48.10" stroke="#ececec" stroke-width="0.5" />
<path d="M638.9 48.3 h1.8 l-0.9 1 z" fill="#b0b0b0" stroke="none" stroke-width="0.4" />
<path d="M644 47.2 h4.6 m-1.2 -1.2 l1.2 1.2 l-1.2 1.2 M648.6 50.0 h-4.6 m1.2 -1.2 l-1.2 1.2 l1.2 1.2" fill="none" stroke="#ececec" stroke-width="0.7" />
<path d="M653.2 48.3 h3 v2.6 h-3 z M654.6 48.3 v-1.4 h3 v2.6 h-1.4 M656 46.9 v-1 h2.4 v2 h-0.8" fill="none" stroke="#ececec" stroke-width="0.6" />
<circle cx="664.3" cy="48.5" r="2.3" fill="none" stroke="#ececec" stroke-width="0.7"/>
<path d="M662.6 47.9 h3.4 v2 h-3.4 z" fill="none" stroke="#ececec" stroke-width="0.5" />
<line x1="670.30" y1="45.10" x2="670.30" y2="51.90" stroke="#46464a" stroke-width="0.5" />
<path d="M673.6 51.1 l2.6 -2.8" fill="none" stroke="#f4f4f4" stroke-width="1.3" />
<circle cx="677.2" cy="47.2" r="1.6" fill="#f4f4f4"/>
<circle cx="678" cy="46.3" r="0.8" fill="#2d2d30"/>
<rect x="680.90" y="44.30" width="8.80" height="8.80" fill="#1e1e1e" stroke="#3d8fd8" stroke-width="0.6"/>
<line x1="683.00" y1="49.10" x2="687.60" y2="49.10" stroke="#f4f4f4" stroke-width="1.1" />
<rect x="583.00" y="54.00" width="182.60" height="8.40" fill="#252526" />
<rect x="583.40" y="54.40" width="181.80" height="7.80" fill="none" stroke="#45454a" stroke-width="0.5"/>
<text x="585.10" y="60.29" font-size="4.7" fill="#8c8c8c" stroke="#8c8c8c" textLength="67.20" lengthAdjust="spacingAndGlyphs" stroke-width="0.04">Search Solution Explorer (Ctrl+;)</text>
<circle cx="757.6" cy="57.5" r="1.4" fill="none" stroke="#f1f1f1" stroke-width="0.8"/>
<line x1="756.60" y1="58.60" x2="755.00" y2="60.30" stroke="#f1f1f1" stroke-width="1.0" />
<rect x="760.60" y="54.60" width="4.60" height="7.40" fill="#38383c" />
<path d="M762 58 h1.8 l-0.9 1 z" fill="#c8c8c8" stroke="none" stroke-width="0.4" />
<rect x="583.00" y="71.30" width="182.60" height="7.60" fill="#007acc" />
<path d="M588.6 66 h4.4 v3.6 h-4.4 z" fill="none" stroke="#e0e0e0" stroke-width="0.5" />
<rect x="588.20" y="68.20" width="2.60" height="2.20" fill="#a070d0" />
<text x="596.40" y="70.24" font-size="5.1" fill="#e4e4e4" stroke="#e4e4e4" textLength="119.20" lengthAdjust="spacingAndGlyphs" >Solution 'many-to-many-relationship-in-ssas' (1 project)</text>
<path d="M589.4000000000001 73.89999999999999 v2.6 h-2.6 z" fill="#fff" stroke="none" stroke-width="0.4" />
<path d="M595 77.7 h6.2 l-1 -2.2 h-4.2 z" fill="#c8c8c8" stroke="none" stroke-width="0.4" />
<rect x="596.80" y="72.50" width="2.60" height="3.00" fill="#f0f0f0" />
<text x="603.90" y="77.40" font-size="5.0" fill="#ffffff" stroke="#ffffff" font-weight="bold" textLength="76.90" lengthAdjust="spacingAndGlyphs" >many-to-many-relationship-in-ssas</text>
<path d="M597.2 81.1 v2.6 h-2.6 z" fill="#f1f1f1" stroke="none" stroke-width="0.4" />
<path d="M603.4 80.3 h2 l0.6 0.7 h2.8 v1.4 h-5.4 z" fill="none" stroke="#e0e0e0" stroke-width="0.5" />
<path d="M603.1 82.3 h5.6 l-0.4 2.6 h-5.2 z" fill="#ececec" stroke="none" stroke-width="0.4" />
<text x="610.60" y="84.64" font-size="5.1" fill="#e4e4e4" stroke="#e4e4e4" textLength="27.20" lengthAdjust="spacingAndGlyphs" >Data Sources</text>
<path d="M610.2 88.1 q1.9 -1.4 3.8 0 v3.4 q-1.9 1.4 -3.8 0 z" fill="#ececec" stroke="none" stroke-width="0.4" />
<path d="M610.2 88.29999999999998 q1.9 1.2 3.8 0" fill="none" stroke="#252526" stroke-width="0.35" />
<text x="617.80" y="91.84" font-size="5.1" fill="#e4e4e4" stroke="#e4e4e4" textLength="58.40" lengthAdjust="spacingAndGlyphs" >AdventureWorksDW2017.ds</text>
<path d="M597.2 95.49999999999999 v2.6 h-2.6 z" fill="#f1f1f1" stroke="none" stroke-width="0.4" />
<path d="M603.4 94.69999999999999 h2 l0.6 0.7 h2.8 v1.4 h-5.4 z" fill="none" stroke="#e0e0e0" stroke-width="0.5" />
<path d="M603.1 96.69999999999999 h5.6 l-0.4 2.6 h-5.2 z" fill="#ececec" stroke="none" stroke-width="0.4" />
<text x="610.60" y="99.04" font-size="5.1" fill="#e4e4e4" stroke="#e4e4e4" textLength="38.40" lengthAdjust="spacingAndGlyphs" >Data Source Views</text>
<path d="M610.6 103.5 h2.6 v2.6 h-2.6 z M612.6 101.89999999999999 h2.6 v2.6 h-2.6 z" fill="none" stroke="#e0e0e0" stroke-width="0.5" />
<text x="617.80" y="106.24" font-size="5.1" fill="#e4e4e4" stroke="#e4e4e4" textLength="60.80" lengthAdjust="spacingAndGlyphs" >AdventureWorksDW2017.dsv</text>
<path d="M597.2 109.89999999999999 v2.6 h-2.6 z" fill="#f1f1f1" stroke="none" stroke-width="0.4" />
<path d="M603.4 109.1 h2 l0.6 0.7 h2.8 v1.4 h-5.4 z" fill="none" stroke="#e0e0e0" stroke-width="0.5" />
<path d="M603.1 111.1 h5.6 l-0.4 2.6 h-5.2 z" fill="#ececec" stroke="none" stroke-width="0.4" />
<text x="610.60" y="113.44" font-size="5.1" fill="#e4e4e4" stroke="#e4e4e4" textLength="13.20" lengthAdjust="spacingAndGlyphs" >Cubes</text>
<circle cx="612.6" cy="118.5" r="2" fill="none" stroke="#e0e0e0" stroke-width="0.5"/>
<text x="617.80" y="120.64" font-size="5.1" fill="#e4e4e4" stroke="#e4e4e4" textLength="38.60" lengthAdjust="spacingAndGlyphs" >InternetSales.cube</text>
<path d="M597.2 124.29999999999998 v2.6 h-2.6 z" fill="#f1f1f1" stroke="none" stroke-width="0.4" />
<path d="M603.4 123.49999999999999 h2 l0.6 0.7 h2.8 v1.4 h-5.4 z" fill="none" stroke="#e0e0e0" stroke-width="0.5" />
<path d="M603.1 125.49999999999999 h5.6 l-0.4 2.6 h-5.2 z" fill="#ececec" stroke="none" stroke-width="0.4" />
<text x="610.60" y="127.84" font-size="5.1" fill="#e4e4e4" stroke="#e4e4e4" textLength="24.80" lengthAdjust="spacingAndGlyphs" >Dimensions</text>
<path d="M610.6 130.7 v4.4 h4.2 M610.6 135.09999999999997 l3.6 -4" fill="none" stroke="#e0e0e0" stroke-width="0.5" />
<text x="617.80" y="135.04" font-size="5.1" fill="#e4e4e4" stroke="#e4e4e4" textLength="26.60" lengthAdjust="spacingAndGlyphs" >Product.dim</text>
<path d="M610.6 137.9 v4.4 h4.2 M610.6 142.29999999999998 l3.6 -4" fill="none" stroke="#e0e0e0" stroke-width="0.5" />
<text x="617.80" y="142.24" font-size="5.1" fill="#e4e4e4" stroke="#e4e4e4" textLength="35.00" lengthAdjust="spacingAndGlyphs" >SalesReason.dim</text>
<path d="M603.4 145.10000000000002 h2 l0.6 0.7 h2.8 v1.4 h-5.4 z" fill="none" stroke="#e0e0e0" stroke-width="0.5" />
<path d="M603.1 147.10000000000002 h5.6 l-0.4 2.6 h-5.2 z" fill="#ececec" stroke="none" stroke-width="0.4" />
<text x="610.60" y="149.44" font-size="5.1" fill="#e4e4e4" stroke="#e4e4e4" textLength="37.80" lengthAdjust="spacingAndGlyphs" >Mining Structures</text>
<path d="M603.4 152.3 h2 l0.6 0.7 h2.8 v1.4 h-5.4 z" fill="none" stroke="#e0e0e0" stroke-width="0.5" />
<path d="M603.1 154.3 h5.6 l-0.4 2.6 h-5.2 z" fill="#ececec" stroke="none" stroke-width="0.4" />
<text x="610.60" y="156.64" font-size="5.1" fill="#e4e4e4" stroke="#e4e4e4" textLength="11.20" lengthAdjust="spacingAndGlyphs" >Roles</text>
<path d="M603.4 159.5 h2 l0.6 0.7 h2.8 v1.4 h-5.4 z" fill="none" stroke="#e0e0e0" stroke-width="0.5" />
<path d="M603.1 161.5 h5.6 l-0.4 2.6 h-5.2 z" fill="#ececec" stroke="none" stroke-width="0.4" />
<text x="610.60" y="163.84" font-size="5.1" fill="#e4e4e4" stroke="#e4e4e4" textLength="23.80" lengthAdjust="spacingAndGlyphs" >Assemblies</text>
<path d="M603.4 166.7 h2 l0.6 0.7 h2.8 v1.4 h-5.4 z" fill="none" stroke="#e0e0e0" stroke-width="0.5" />
<path d="M603.1 168.7 h5.6 l-0.4 2.6 h-5.2 z" fill="#ececec" stroke="none" stroke-width="0.4" />
<text x="610.60" y="171.04" font-size="5.1" fill="#e4e4e4" stroke="#e4e4e4" textLength="30.40" lengthAdjust="spacingAndGlyphs" >Miscellaneous</text>
</g>
</svg>
</body></html>
